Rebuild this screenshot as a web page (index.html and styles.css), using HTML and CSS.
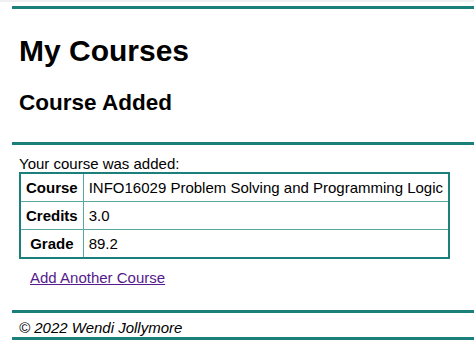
FILE: index.html
```html
<!DOCTYPE html>
<html lang="en">
<head>
<meta charset="utf-8">
<title>My Courses</title>
<link rel="stylesheet" href="styles.css">
</head>
<body>
<div class="page">
  <header class="site-header">
    <h1 class="title">My Courses</h1>
    <h2 class="subtitle">Course Added</h2>
  </header>
  <main class="content">
    <p class="intro">Your course was added:</p>
    <table class="course-table">
      <tr><th>Course</th><td>INFO16029 Problem Solving and Programming Logic</td></tr>
      <tr><th>Credits</th><td>3.0</td></tr>
      <tr><th>Grade</th><td>89.2</td></tr>
    </table>
    <p class="actions"><a class="link" href="#">Add Another Course</a></p>
  </main>
  <footer class="site-footer">
    <p class="copy">© 2022 Wendi Jollymore</p>
  </footer>
</div>
</body>
</html>
```

FILE: styles.css
```css
html, body {
  margin: 0;
  padding: 0;
  background: #fff;
}
body {
  font-family: "Liberation Sans", Arial, sans-serif;
  font-size: 15px;
  color: #000;
  border-top: 2px solid #eef0f2;
}
.page {
  margin-left: 12px;
  padding-top: 4px;
}
.site-header {
  border-top: 3px solid #1b7f7c;
  border-bottom: 3px solid #1b7f7c;
  padding: 0 7px;
}
.title {
  margin: 25px 0 0;
  font-size: 30px;
  line-height: 34px;
  font-weight: bold;
}
.subtitle {
  margin: 22px 0 26px;
  font-size: 22.5px;
  line-height: 26px;
  font-weight: bold;
}
.content {
  padding: 0 7px;
}
.intro {
  margin: 10px 0 0;
  line-height: 17px;
}
.course-table {
  border-collapse: collapse;
  border: 2px solid #1b7f7c;
}
.course-table th,
.course-table td {
  border: 1px solid #5aa7a4;
  padding: 0 5px;
  height: 27px;
  line-height: 17px;
  text-align: left;
}
.course-table th {
  text-align: center;
  font-weight: bold;
}
.actions {
  margin: 10px 0 0;
  padding-left: 11px;
  line-height: 17px;
}
.link {
  color: #551a8b;
  text-decoration: underline;
}
.site-footer {
  margin-top: 24px;
  border-top: 3px solid #1b7f7c;
  border-bottom: 3px solid #1b7f7c;
  padding: 6px 7px 1px;
}
.copy {
  margin: 0;
  font-style: italic;
  line-height: 17px;
}
```
